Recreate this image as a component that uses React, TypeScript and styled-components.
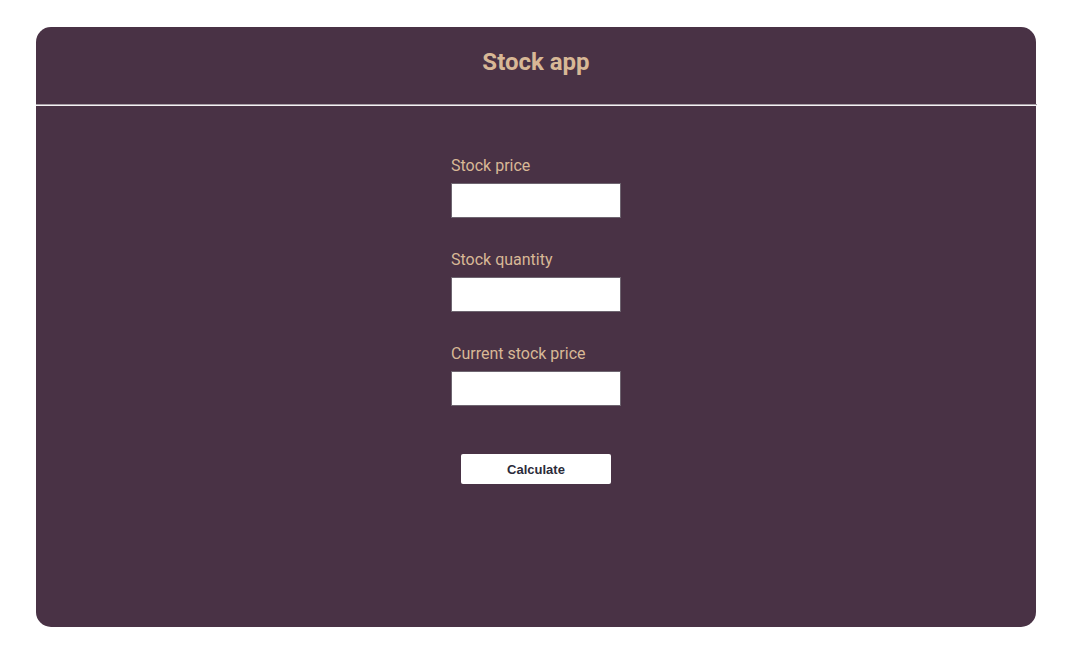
import React from 'react';
import styled, { createGlobalStyle } from 'styled-components';

const GlobalStyle = createGlobalStyle`
  body {
    margin: 0;
    background: #ffffff;
    font-family: Roboto, 'Liberation Sans', sans-serif;
  }
`;

const Page = styled.div`
  padding: 27px 0 20px 36px;
`;

const Card = styled.main`
  width: 1000px;
  height: 600px;
  background: #493245;
  border-radius: 15px;
  display: flex;
  flex-direction: column;
`;

const Header = styled.header`
  padding: 20px 0 27px;
  display: flex;
  justify-content: center;
`;

const Title = styled.h1`
  margin: 0;
  font-size: 24px;
  line-height: 30px;
  font-weight: 700;
  color: #d8b896;
`;

const Divider = styled.div`
  width: calc(100% + 1px);
  height: 0;
  border-top: 1px solid #a79ea5;
  border-bottom: 1px solid #f4f2f4;
`;

const Form = styled.form`
  display: flex;
  flex-direction: column;
  align-items: center;
  padding-top: 50px;
`;

const Field = styled.div`
  display: flex;
  flex-direction: column;
  gap: 8px;
  width: 170px;
  margin-bottom: 32px;
`;

const Label = styled.label`
  font-size: 16px;
  line-height: 19px;
  color: #d8b896;
`;

const Input = styled.input`
  box-sizing: border-box;
  width: 170px;
  height: 35px;
  border: 1px solid #6e6570;
  background: #ffffff;
  padding: 0 6px;
  font-size: 15px;
  outline: none;
`;

const Button = styled.button`
  margin-top: 16px;
  width: 150px;
  height: 30px;
  border: none;
  border-radius: 2px;
  background: #ffffff;
  color: #2b2b3a;
  font-family: 'Liberation Sans', Arial, sans-serif;
  font-size: 13px;
  font-weight: 700;
  cursor: pointer;
`;

const fields = ['Stock price', 'Stock quantity', 'Current stock price'];

export default function App() {
  return (
    <>
      <GlobalStyle />
      <Page>
        <Card>
          <Header>
            <Title>Stock app</Title>
          </Header>
          <Divider />
          <Form onSubmit={(e) => e.preventDefault()}>
            {fields.map((label) => (
              <Field key={label}>
                <Label>{label}</Label>
                <Input type="number" />
              </Field>
            ))}
            <Button type="submit">Calculate</Button>
          </Form>
        </Card>
      </Page>
    </>
  );
}
